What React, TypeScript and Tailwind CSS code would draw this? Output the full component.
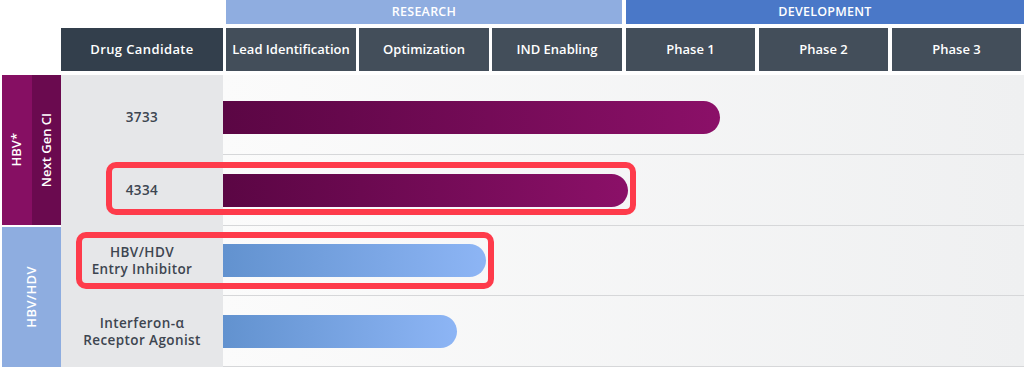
import React from "react";

const font = { fontFamily: '"Open Sans", "Noto Sans", sans-serif' };

function Bar({ width, kind }: { width: number; kind: "purple" | "blue" }) {
  const cls =
    kind === "purple"
      ? "h-[33px] rounded-r-full bg-gradient-to-r from-[#5b0644] to-[#8b1068]"
      : "h-[33px] rounded-r-full bg-gradient-to-r from-[#6292cf] to-[#8db5f5]";
  return <div className={cls} style={{ width }} />;
}

export default function App() {
  const stages = ["Lead Identification", "Optimization", "IND Enabling"];
  const dev = ["Phase 1", "Phase 2", "Phase 3"];
  return (
    <div className="w-[1024px] h-[367px] bg-white overflow-hidden text-[#3d4550]" style={font}>
      {/* top band */}
      <div className="flex h-[24px]">
        <div className="w-[226px]" />
        <div className="w-[396px] bg-[#8fade0] flex items-center justify-center text-white text-[12.5px] font-semibold tracking-[0.02em]">
          RESEARCH
        </div>
        <div className="w-[4px]" />
        <div className="flex-1 bg-[#4a78c8] flex items-center justify-center text-white text-[12.5px] font-semibold tracking-[0.02em]">
          DEVELOPMENT
        </div>
      </div>
      {/* header row */}
      <div className="flex h-[43px] mt-[4px] text-white text-[13px] font-semibold">
        <div className="w-[61px]" />
        <div className="w-[162px] bg-[#333f4c] flex items-center justify-center tracking-[0.03em]">Drug Candidate</div>
        <div className="w-[3px]" />
        <div className="flex gap-[3px]">
          {stages.map((s) => (
            <div key={s} className="w-[130px] bg-[#434e5a] flex items-center justify-center whitespace-nowrap">
              {s}
            </div>
          ))}
        </div>
        <div className="w-[4px]" />
        <div className="flex gap-[4px]">
          {dev.map((s) => (
            <div key={s} className="w-[129px] bg-[#434e5a] flex items-center justify-center">
              {s}
            </div>
          ))}
        </div>
      </div>
      {/* body */}
      <div className="relative flex h-[292px] mt-[4px]">
        <div className="w-[61px] pl-[2px] flex flex-col">
          <div className="h-[150px] flex">
            <div className="w-[30px] bg-[#860f63] flex items-center justify-center">
              <span className="[writing-mode:vertical-rl] rotate-180 text-white text-[13px] font-semibold">HBV*</span>
            </div>
            <div className="w-[29px] bg-[#6a0a4f] flex items-center justify-center">
              <span className="[writing-mode:vertical-rl] rotate-180 text-white text-[13px] font-semibold whitespace-nowrap">
                Next Gen CI
              </span>
            </div>
          </div>
          <div className="h-[2px]" />
          <div className="flex-1 bg-[#8eade0] flex items-center justify-center">
            <span className="[writing-mode:vertical-rl] rotate-180 text-white text-[13px] font-semibold tracking-[0.03em]">HBV/HDV</span>
          </div>
        </div>
        <div className="w-[162px] bg-[#e6e7e9] flex flex-col text-[13.5px] font-semibold tracking-[0.03em] text-center leading-[17px]">
          <div className="h-[80px] pt-[26px]">
            <div className="h-[33px] flex items-center justify-center">3733</div>
          </div>
          <div className="h-[71px] flex items-center justify-center">4334</div>
          <div className="h-[70px] flex items-center justify-center">
            <div>
              HBV/HDV
              <br />
              Entry Inhibitor
            </div>
          </div>
          <div className="h-[71px] flex items-center justify-center">
            <div>
              Interferon-α
              <br />
              Receptor Agonist
            </div>
          </div>
        </div>
        <div className="flex-1 flex flex-col bg-gradient-to-r from-[#fbfbfb] to-[#eff0f1]">
          <div className="h-[80px] pt-[26px] border-b border-[#d6d7d9]">
            <Bar width={497} kind="purple" />
          </div>
          <div className="h-[71px] flex items-center border-b border-[#d6d7d9]">
            <Bar width={405} kind="purple" />
          </div>
          <div className="h-[70px] flex items-center border-b border-[#d6d7d9]">
            <Bar width={263} kind="blue" />
          </div>
          <div className="h-[71px] flex items-center border-b border-[#d6d7d9]">
            <Bar width={234} kind="blue" />
          </div>
        </div>
        {/* highlight boxes */}
        <div className="absolute left-[106px] top-[87px] w-[530px] h-[53px] border-[6px] border-[#fe3b4b] rounded-[10px]" />
        <div className="absolute left-[76px] top-[157px] w-[418px] h-[57px] border-[6px] border-[#fe3b4b] rounded-[10px]" />
      </div>
    </div>
  );
}
